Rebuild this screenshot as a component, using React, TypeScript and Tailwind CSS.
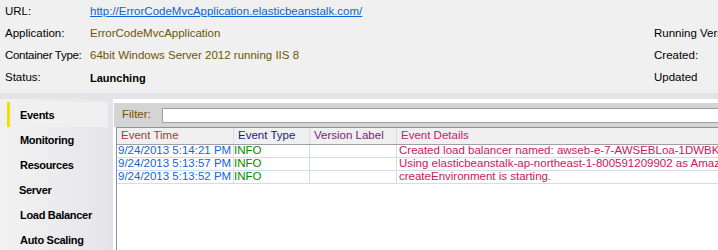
const rows = [
  {
    time: '9/24/2013 5:14:21 PM',
    type: 'INFO',
    label: '',
    details: 'Created load balancer named: awseb-e-7-AWSEBLoa-1DWBKY3XYZ0QZ',
  },
  {
    time: '9/24/2013 5:13:57 PM',
    type: 'INFO',
    label: '',
    details: 'Using elasticbeanstalk-ap-northeast-1-800591209902 as Amazon S3 storage bucket for environment data.',
  },
  {
    time: '9/24/2013 5:13:52 PM',
    type: 'INFO',
    label: '',
    details: 'createEnvironment is starting.',
  },
];

const nav = ['Events', 'Monitoring', 'Resources', 'Server', 'Load Balancer', 'Auto Scaling'];

export default function App() {
  return (
    <div className="w-[718px] h-[250px] overflow-hidden bg-[#f0f0f0] text-[11.5px] text-black font-['Liberation_Sans',Arial,sans-serif] flex flex-col">
      {/* Environment summary */}
      <div className="h-[93px] shrink-0 flex">
        <div className="grid grid-cols-[85px_1fr] auto-rows-[22px] items-center pl-[5px] pt-[1px] leading-none">
          <span>URL:</span>
          <a href="#" className="text-[#0a64d2] underline whitespace-nowrap">
            http://ErrorCodeMvcApplication.elasticbeanstalk.com/
          </a>
          <span>Application:</span>
          <span className="text-[#6e5600]">ErrorCodeMvcApplication</span>
          <span className="tracking-[-0.3px] whitespace-nowrap">Container Type:</span>
          <span className="text-[#6e5600]">64bit Windows Server 2012 running IIS 8</span>
          <span>Status:</span>
          <span className="font-bold text-[11px]">Launching</span>
        </div>
        <div className="ml-auto w-[64px] pt-[23px] grid auto-rows-[22px] items-center leading-none whitespace-nowrap overflow-hidden">
          <span>Running Version:</span>
          <span>Created:</span>
          <span>Updated</span>
        </div>
      </div>

      <div className="flex-1 flex bg-[#e4e4e8] pt-[6px] gap-[5px] min-h-0">
        {/* Left navigation */}
        <div className="w-[108px] shrink-0 pt-[3px] bg-gradient-to-r from-[#f2f2f2] to-[#e6e6ea]">
          {nav.map((n, i) => (
            <div
              key={n}
              className={`h-[25px] flex items-center font-bold text-[11px] tracking-[-0.3px] leading-none ${
                i === 0 ? 'bg-[#f0f0f0]' : ''
              }`}
            >
              <span className={`w-[3px] h-full ml-[7px] mr-[10px] ${i === 0 ? 'bg-[#f0e000]' : ''}`} />
              <span className={`pt-[1px] ${i === 3 ? '-ml-[1px]' : ''}`}>{n}</span>
            </div>
          ))}
        </div>

        {/* Events panel */}
        <div className="flex-1 bg-white pt-[4px] pl-[1px] min-w-0 flex flex-col">
          <div className="h-[24px] bg-[#d4d4d4] flex items-center pl-[8px] shrink-0">
            <span className="text-[#7a4e00] w-[40px]">Filter:</span>
            <div className="flex-1 h-[15px] bg-white border-y border-l border-[#a0a0a0]" />
          </div>
          <div className="ml-[2px] border-l border-t border-[#8294b4] flex-1 text-[11.5px] leading-none">
            <div className="grid grid-cols-[117px_76px_87px_1fr] h-[17px] bg-[#f0f0f0] border-b border-[#a0a0a0]">
              <div className="flex items-center pl-[4px] border-r border-[#dcdcdc] text-[#a83a3a]">Event Time</div>
              <div className="flex items-center pl-[4px] border-r border-[#dcdcdc] text-[#1c1c80]">Event Type</div>
              <div className="flex items-center pl-[4px] border-r border-[#dcdcdc] text-[#7a2478]">Version Label</div>
              <div className="flex items-center pl-[4px] text-[#c8206e]">Event Details</div>
            </div>
            {rows.map((r) => (
              <div
                key={r.time}
                className="grid grid-cols-[117px_76px_87px_1fr] h-[13px] border-b border-[#d0dcf0] whitespace-nowrap"
              >
                <div className="flex items-center pl-[1px] border-r border-[#d0dcf0] text-[#1464d2] overflow-hidden">{r.time}</div>
                <div className="flex items-center border-r border-[#d0dcf0] text-[#008a00]">{r.type}</div>
                <div className="flex items-center border-r border-[#d0dcf0]">{r.label}</div>
                <div className="flex items-center pl-[2px] text-[#d0145a] overflow-hidden">{r.details}</div>
              </div>
            ))}
          </div>
        </div>
      </div>
    </div>
  );
}
